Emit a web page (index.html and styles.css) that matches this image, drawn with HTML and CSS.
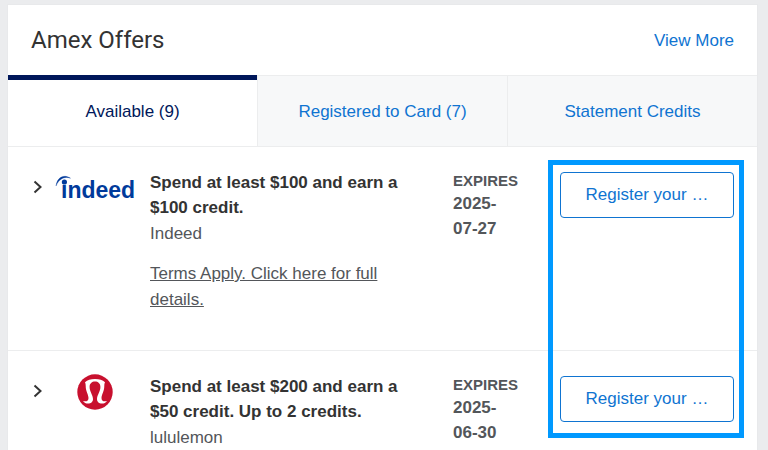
FILE: index.html
```html
<!DOCTYPE html>
<html lang="en">
<head>
    <meta charset="UTF-8">
    <meta name="viewport" content="width=device-width, initial-scale=1.0">
    <title>Amex Offers</title>
    <link rel="stylesheet" href="styles.css">
</head>
<body>
    <main class="card">
        <header class="card-header">
            <h1>Amex Offers</h1>
            <a href="#" class="view-more">View More</a>
        </header>

        <nav class="tabs">
            <a href="#" class="tab active">Available (9)</a>
            <a href="#" class="tab">Registered to Card (7)</a>
            <a href="#" class="tab">Statement Credits</a>
        </nav>

        <div class="offers">
            <section class="offer">
                <button class="expand" aria-label="Show details">
                    <svg width="10" height="14" viewBox="0 0 10 14"><path d="M1.5 1.5 L7.5 7 L1.5 12.5" fill="none" stroke="#333" stroke-width="2"/></svg>
                </button>
                <div class="logo">
                    <svg width="82" height="28" viewBox="0 0 82 28">
                        <text x="7" y="24" class="indeed">indeed</text>
                        <rect x="5" y="3" width="8" height="8" fill="#fff"/>
                        <circle cx="10.4" cy="8" r="2.6" fill="#003a9b"/>
                        <path d="M2 12 C3 4 9 -0.5 16.5 4.2 C10.5 2 5 4.8 2 12 Z" fill="#003a9b" stroke="#003a9b" stroke-width="0.3"/>
                    </svg>
                </div>
                <div class="info">
                    <h2>Spend at least $100 and earn a $100 credit.</h2>
                    <p>Indeed</p>
                    <a href="#" class="terms">Terms Apply. Click here for full details.</a>
                </div>
                <div class="expires">
                    <span class="label">EXPIRES</span>
                    <span class="date">2025-07-27</span>
                </div>
                <button class="register">Register your …</button>
            </section>

            <section class="offer">
                <button class="expand" aria-label="Show details">
                    <svg width="10" height="14" viewBox="0 0 10 14"><path d="M1.5 1.5 L7.5 7 L1.5 12.5" fill="none" stroke="#333" stroke-width="2"/></svg>
                </button>
                <div class="logo">
                    <svg width="36" height="36" viewBox="0 0 36 36">
                        <circle cx="18" cy="18" r="17.7" fill="#c8102e"/>
                        <path d="M6 27 C8 30.5 16 31 16 25 C16 21 12.6 17.5 12.6 13 C12.6 9.5 15 7.6 18 7.6 C21 7.6 23.4 9.5 23.4 13 C23.4 17.5 20 21 20 25 C20 31 28 30.5 30 27 C26.5 28 24.5 26.8 24.5 24 C24.5 20.5 27.3 17.5 27.3 12 C27.3 10 27.6 9 28 8.2 C25.5 5.8 22.5 5 18 5 C13.5 5 10.5 5.8 8 8.2 C8.4 9 8.7 10 8.7 12 C8.7 17.5 11.5 20.5 11.5 24 C11.5 26.8 9.5 28 6 27 Z" fill="#fff"/>
                    </svg>
                </div>
                <div class="info">
                    <h2>Spend at least $200 and earn a $50 credit. Up to 2 credits.</h2>
                    <p>lululemon</p>
                </div>
                <div class="expires">
                    <span class="label">EXPIRES</span>
                    <span class="date">2025-06-30</span>
                </div>
                <button class="register">Register your …</button>
            </section>

            <div class="highlight"></div>
        </div>
    </main>
</body>
</html>
```
FILE: styles.css
```css
* {
    box-sizing: border-box;
}

body {
    margin: 0;
    padding: 4px 10px 0 7px;
    background-color: #ebecee;
    font-family: "Liberation Sans", Arial, sans-serif;
    font-size: 17px;
    line-height: 25px;
    color: #333;
}

a {
    color: #0f74d1;
    text-decoration: none;
}

h1, h2, p {
    margin: 0;
}

.card {
    background-color: #fff;
    border: 1px solid #e8e9eb;
    border-bottom: none;
}

.card-header {
    display: flex;
    justify-content: space-between;
    align-items: center;
    height: 70px;
    padding: 0 23px;
}

h1 {
    font-family: Roboto, sans-serif;
    font-size: 24px;
    font-weight: 400;
}

.tabs {
    display: flex;
}

.tab {
    flex: 1;
    padding: 23px 0 22px;
    text-align: center;
    background-color: #f7f8f9;
    border-top: 1px solid #ecedee;
    border-bottom: 1px solid #ecedee;
    border-left: 1px solid #ecedee;
}

.tab.active {
    color: #00175a;
    background-color: #fff;
    border-top: 5px solid #00175a;
    padding-top: 19px;
    border-left: none;
}

.offers {
    position: relative;
}

.offer {
    display: flex;
    align-items: flex-start;
    min-height: 204px;
    padding: 23px 23px 0;
    border-bottom: 1px solid #ecedee;
}

.offer:nth-child(2) {
    min-height: 0;
    border-bottom: none;
}

.expand {
    width: 12px;
    height: 14px;
    margin: 10px 10px 0 0;
    padding: 0 0 0 2px;
    border: none;
    background: none;
    line-height: 0;
}

.logo {
    width: 84px;
    height: 36px;
    margin: 0 13px 0 0;
    display: flex;
    align-items: center;
    justify-content: center;
}

.indeed {
    font-family: "Liberation Sans", Arial, sans-serif;
    font-size: 23px;
    font-weight: 700;
    fill: #003a9b;
}

.info {
    flex: 1;
    padding-right: 36px;
}

h2 {
    font-size: 17px;
    line-height: 25px;
    margin-bottom: 1px;
}

.info p {
    color: #53565a;
    margin-bottom: 15px;
}

.terms {
    display: block;
    color: #53565a;
    text-decoration: underline;
    line-height: 26px;
}

.expires {
    width: 66px;
    margin-right: 41px;
    font-weight: bold;
    color: #53565a;
}

.expires span {
    display: block;
}

.label {
    font-size: 15px;
    line-height: 21px;
}

.register {
    width: 174px;
    height: 46px;
    margin-top: 2px;
    border: 1px solid #0f74d1;
    border-radius: 4px;
    background-color: #fff;
    color: #0f74d1;
    font-family: inherit;
    font-size: 17px;
}

.offer:nth-child(2) p {
    margin-bottom: 0;
}

/* frame around the register buttons */
.highlight {
    position: absolute;
    top: 13px;
    right: 13px;
    width: 196px;
    height: 278px;
    border: 5px solid #0099ff;
    pointer-events: none;
}
```
